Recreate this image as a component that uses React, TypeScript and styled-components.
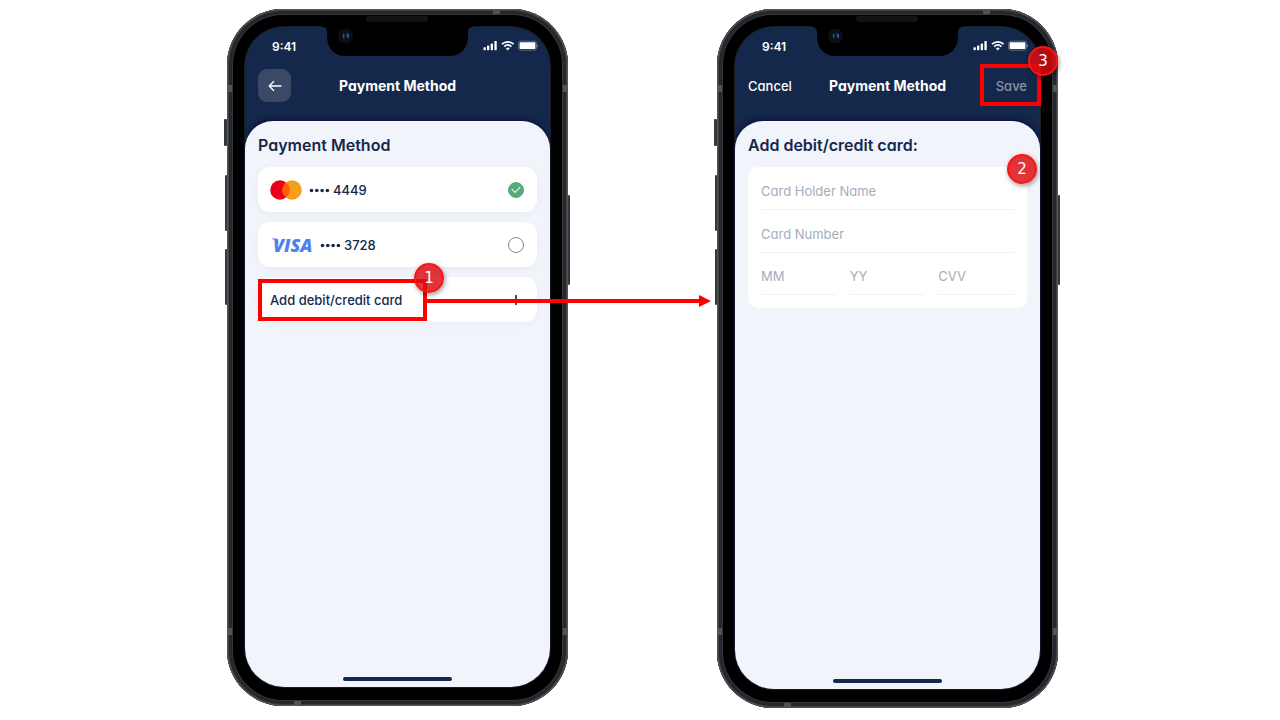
import React from "react";
import styled, { createGlobalStyle } from "styled-components";

const navy = "#14284b";
const red = "#ff0000";

const GlobalStyle = createGlobalStyle`
  *, *::before, *::after { box-sizing: border-box; }
  body { margin: 0; background: #fff; }
  button, input { font: inherit; color: inherit; }
`;

const Stage = styled.main`
  display: flex;
  justify-content: center;
  align-items: flex-start;
  gap: 149px;
  padding: 9px 0 8px 5px;
  color: ${navy};
  font-family: Inter, "Liberation Sans", sans-serif;
  font-feature-settings: "cv11";
`;

const Phone = styled.section<{ $height: number }>`
  position: relative;
  display: flex;
  flex: 0 0 341px;
  min-height: ${(p) => p.$height}px;
  padding: 6px;
  border-radius: 56px;
  background: #25282d;
  box-shadow: inset 0 0 0 1px #54575a, inset 0 0 0 2px #3d4043, inset 0 0 0 5px #24272c, inset 0 0 0 6px #34373a;
`;

const Bezel = styled.div`
  display: flex;
  flex: 1;
  padding: 12px 12px 13px;
  border-radius: 50px;
  background: #000;
`;

const SideKey = styled.span<{ $side: "left" | "right"; $top: number; $length: number; $depth: number }>`
  position: absolute;
  ${(p) => p.$side}: -${(p) => p.$depth}px;
  top: ${(p) => p.$top}px;
  width: ${(p) => p.$depth}px;
  height: ${(p) => p.$length}px;
  border-radius: 1px;
  background: #34383b;
`;

const Antenna = styled.span<{ $edge: "left" | "right" | "top" | "bottom"; $at: number }>`
  position: absolute;
  ${(p) => p.$edge}: 0;
  ${(p) =>
    p.$edge === "left" || p.$edge === "right"
      ? `top: ${p.$at}px; width: 5px; height: 7px;`
      : `left: ${p.$at}px; width: 7px; height: 5px;`}
  background: #505356;
`;

const Notch = styled.svg`
  position: absolute;
  top: 5px;
  left: 95px;
  width: 151px;
  height: 43px;
`;

const Screen = styled.div`
  display: flex;
  flex: 1;
  flex-direction: column;
  min-width: 0;
  border-radius: 39px;
  background: ${navy};
  box-shadow: 0 0 0 1px #1b1e23;
`;

const StatusBar = styled.div`
  display: flex;
  align-items: center;
  justify-content: space-between;
  height: 38px;
  padding: 0 12px 0 27px;
  color: #fff;
  font-size: 12px;
  font-weight: 600;
`;

const NavBar = styled.header`
  display: grid;
  grid-template-columns: 1fr auto 1fr;
  align-items: center;
  height: 41px;
  margin-bottom: 15px;
  padding: 0 13px;
  color: #fff;
`;

const NavTitle = styled.h1`
  grid-column: 2;
  margin: 0;
  font-size: 14px;
  line-height: 20px;
  font-weight: 700;
`;

const BackButton = styled.button`
  display: grid;
  place-items: center;
  width: 33px;
  height: 33px;
  padding: 0;
  border: 0;
  border-radius: 9px;
  background: #394966;
`;

const NavButton = styled.button<{ $muted?: boolean }>`
  position: relative;
  justify-self: ${(p) => (p.$muted ? "end" : "start")};
  padding: 0;
  border: 0;
  background: none;
  color: ${(p) => (p.$muted ? "#8993a5" : "#fff")};
  font-size: 13px;
  line-height: 20px;
  font-weight: 500;
`;

const Sheet = styled.div`
  display: flex;
  flex: 1;
  flex-direction: column;
  padding: 13px 13px 6px;
  border-radius: 28px 28px 39px 39px;
  background: #f1f4fa;
  box-shadow: 0 -2px 6px -1px #080a35;
`;

const SheetTitle = styled.h2`
  margin: 0 0 11px;
  font-size: 16px;
  line-height: 22px;
  font-weight: 600;
`;

const CardList = styled.div`
  display: flex;
  flex-direction: column;
  gap: 10px;
`;

const row = `
  position: relative;
  display: flex;
  align-items: center;
  width: 100%;
  height: 45px;
  padding: 0 13px 0 12px;
  border: 0;
  border-radius: 12px;
  background: #fff;
  box-shadow: 0 2px 8px rgba(20, 40, 75, 0.04);
  font-size: 13px;
  font-weight: 500;
`;

const CardOption = styled.label`
  ${row}
  gap: 7px;
`;

const AddCardButton = styled.button`
  ${row}
  justify-content: space-between;
`;

const CardDigits = styled.span`
  display: flex;
  align-items: center;
  gap: 3px;
`;

const Dots = styled.svg`
  width: 21px;
  height: 6px;
`;

const VisaLogo = styled.svg`
  width: 43px;
  height: 26px;
  overflow: visible;
  font-family: "Open Sans", sans-serif;
  font-size: 18px;
  font-weight: 800;
  font-style: italic;
`;

const Radio = styled.input`
  appearance: none;
  width: 16px;
  height: 16px;
  margin: 0 0 0 auto;
  border: 1px solid #7c879b;
  border-radius: 50%;
  display: grid;
  place-items: center;

  &:checked {
    border-color: #55ac78;
    background: #55ac78;
  }

  &:checked::after {
    content: "";
    width: 8px;
    height: 5px;
    margin-bottom: 3px;
    border: solid #fff;
    border-width: 0 0 1px 1px;
    transform: rotate(-45deg);
  }
`;

const Form = styled.form`
  display: flex;
  flex-direction: column;
  padding: 0 13px 13px;
  border-radius: 10px;
  background: #fff;
`;

const Field = styled.input`
  width: 100%;
  min-width: 0;
  height: 43px;
  padding: 5px 0 0;
  border: 0;
  border-bottom: 1px solid #eff1f3;
  border-radius: 0;
  background: none;
  outline: none;
  font-size: 13px;

  &::placeholder {
    color: #a5adbb;
    opacity: 1;
  }
`;

const FieldRow = styled.div`
  display: grid;
  grid-template-columns: repeat(3, 1fr);
  gap: 13px;

  ${Field} {
    height: 42px;
  }
`;

const HomeIndicator = styled.div`
  width: 109px;
  height: 4px;
  margin: auto auto 0;
  border-radius: 2px;
  background: ${navy};
`;

const Outline = styled.span<{ $inset: string }>`
  position: absolute;
  inset: ${(p) => p.$inset};
  border: 4px solid ${red};
  pointer-events: none;
`;

const Arrow = styled.svg`
  position: absolute;
  z-index: 1;
  top: 286px;
  left: 199px;
  width: 285px;
  height: 12px;
`;

const Badge = styled.span<{ $top: number; $left: number }>`
  position: absolute;
  z-index: 2;
  top: ${(p) => p.$top}px;
  left: ${(p) => p.$left}px;
  display: grid;
  place-items: center;
  width: 30px;
  height: 30px;
  border: 2px solid #fa1414;
  border-radius: 50%;
  background: rgba(220, 12, 18, 0.83);
  box-shadow: 1px 2px 5px rgba(0, 0, 0, 0.4);
  color: #fff;
  font: 15px/20px "DejaVu Sans", sans-serif;
`;

function StatusIcons() {
  return (
    <svg width="55" height="12" viewBox="0 0 55 12" fill="#fff" aria-hidden="true">
      <rect x="0.5" y="7.2" width="2.3" height="3" rx="0.6" />
      <rect x="4" y="5.6" width="2.3" height="4.6" rx="0.6" />
      <rect x="7.7" y="3.6" width="2.3" height="6.6" rx="0.6" />
      <rect x="11.4" y="1" width="2.3" height="9.2" rx="0.6" />
      <g fill="none" stroke="#fff" strokeWidth="1.7">
        <path d="M19 4.2C22.3 1 27.3 1 30.6 4.2" />
        <path d="M21.2 6.6C23.3 4.7 26.3 4.7 28.4 6.6" />
      </g>
      <path d="M22.9 8.2Q24.8 6.8 26.7 8.2L24.8 10.4Z" />
      <rect x="35.5" y="1.2" width="18" height="9" rx="2.2" fill="none" stroke="#6b7a95" strokeWidth="0.8" />
      <rect x="36.6" y="2.3" width="15.8" height="6.8" rx="0.8" />
      <path d="M54 4.2Q55 4.8 55 5.8T54 7.3Z" fill="#8390a8" />
    </svg>
  );
}

function CardDots() {
  return (
    <Dots viewBox="0 0 21 6" fill={navy} aria-label="ending in">
      <circle cx="2.5" cy="3.5" r="1.8" />
      <circle cx="7.8" cy="3.5" r="1.8" />
      <circle cx="13.1" cy="3.5" r="1.8" />
      <circle cx="18.4" cy="3.5" r="1.8" />
    </Dots>
  );
}

function Device({ height, children, nav }: { height: number; children: React.ReactNode; nav: React.ReactNode }) {
  return (
    <Phone $height={height}>
      <SideKey $side="left" $top={110} $length={27} $depth={3} />
      <SideKey $side="left" $top={166} $length={56} $depth={2} />
      <SideKey $side="left" $top={240} $length={56} $depth={2} />
      <SideKey $side="right" $top={186} $length={90} $depth={2} />
      <Bezel>
        <Screen>
          <StatusBar>
            <span>9:41</span>
            <StatusIcons />
          </StatusBar>
          <NavBar>{nav}</NavBar>
          <Sheet>
            {children}
            <HomeIndicator />
          </Sheet>
        </Screen>
      </Bezel>
      <Antenna $edge="left" $at={76} />
      <Antenna $edge="right" $at={76} />
      <Antenna $edge="left" $at={619} />
      <Antenna $edge="right" $at={619} />
      <Antenna $edge="top" $at={266} />
      <Antenna $edge="bottom" $at={67} />
      <Notch viewBox="0 0 151 43" aria-hidden="true">
        <path d="M0 12H151V13Q146 13 146 18V22C146 34 139 42 127 42H23C12 42 5 34 5 22V18Q5 13 0 13Z" />
        <rect x="44" y="2" width="62" height="6" rx="3" fill="#111315" />
        <circle cx="23.5" cy="22" r="7.5" fill="#0c0e11" />
        <circle cx="23.5" cy="22" r="4" fill="#071322" />
        <path d="M22 19Q19.5 22 22 25Q23 22 22 19Z" fill="#176b70" />
        <path d="M25 19Q28.5 21 26.5 24.5Q24 23 25 19Z" fill="#2157bd" />
      </Notch>
    </Phone>
  );
}

const PhoneSlot = styled.div`
  position: relative;
  display: flex;
`;

export default function App() {
  return (
    <>
      <GlobalStyle />
      <Stage>
        <PhoneSlot>
          <Device
            height={697}
            nav={
              <>
                <BackButton type="button" aria-label="Back">
                  <svg width="14" height="12" viewBox="0 0 14 12" fill="none" stroke="#fff" strokeWidth="1.3" strokeLinecap="round" strokeLinejoin="round">
                    <path d="M13 6H1.2M5.6 1.5L1.2 6L5.6 10.5" />
                  </svg>
                </BackButton>
                <NavTitle>Payment Method</NavTitle>
              </>
            }
          >
            <SheetTitle>Payment Method</SheetTitle>
            <CardList>
              <CardOption>
                <svg width="32" height="20" viewBox="0 0 32 20" role="img" aria-label="Mastercard">
                  <circle cx="9.9" cy="10" r="9.7" fill="#eb001b" />
                  <circle cx="22.1" cy="10" r="9.7" fill="#f79e1b" />
                  <path d="M16 2.45A9.7 9.7 0 0 1 16 17.55A9.7 9.7 0 0 1 16 2.45Z" fill="#ff5f00" />
                </svg>
                <CardDigits><CardDots />4449</CardDigits>
                <Radio type="radio" name="card" defaultChecked />
              </CardOption>
              <CardOption>
                <VisaLogo viewBox="0 0 43 26" fill="#4f82f1">
                  <path d="M1 6.6H6.2Q7.6 6.7 8 8.2L8.8 12Q6.5 8.3 1 6.6Z" />
                  <text x="3" y="19.5">VISA</text>
                </VisaLogo>
                <CardDigits><CardDots />3728</CardDigits>
                <Radio type="radio" name="card" />
              </CardOption>
              <AddCardButton type="button">
                <span>Add debit/credit card</span>
                <svg width="16" height="12" viewBox="0 0 16 12" stroke={navy} strokeWidth="1.6" aria-hidden="true">
                  <path d="M8 1V11M3 6H13" />
                </svg>
                <Outline $inset="2px 110px 1px 0" />
              </AddCardButton>
            </CardList>
          </Device>
          <Arrow viewBox="0 0 285 12" fill={red} aria-hidden="true">
            <path d="M0 4H273V0L285 6L273 12V8H0Z" />
          </Arrow>
          <Badge $top={254} $left={187}>1</Badge>
        </PhoneSlot>
        <PhoneSlot>
          <Device
            height={699}
            nav={
              <>
                <NavButton type="button">Cancel</NavButton>
                <NavTitle>Payment Method</NavTitle>
                <NavButton type="button" $muted>
                  Save
                  <Outline $inset="-12px -14px -10px -16px" />
                </NavButton>
              </>
            }
          >
            <SheetTitle>Add debit/credit card:</SheetTitle>
            <Form>
              <Field placeholder="Card Holder Name" aria-label="Card Holder Name" />
              <Field placeholder="Card Number" aria-label="Card Number" />
              <FieldRow>
                <Field placeholder="MM" aria-label="Expiry month" />
                <Field placeholder="YY" aria-label="Expiry year" />
                <Field placeholder="CVV" aria-label="CVV" />
              </FieldRow>
            </Form>
          </Device>
          <Badge $top={145} $left={290}>2</Badge>
          <Badge $top={37} $left={311}>3</Badge>
        </PhoneSlot>
      </Stage>
    </>
  );
}
